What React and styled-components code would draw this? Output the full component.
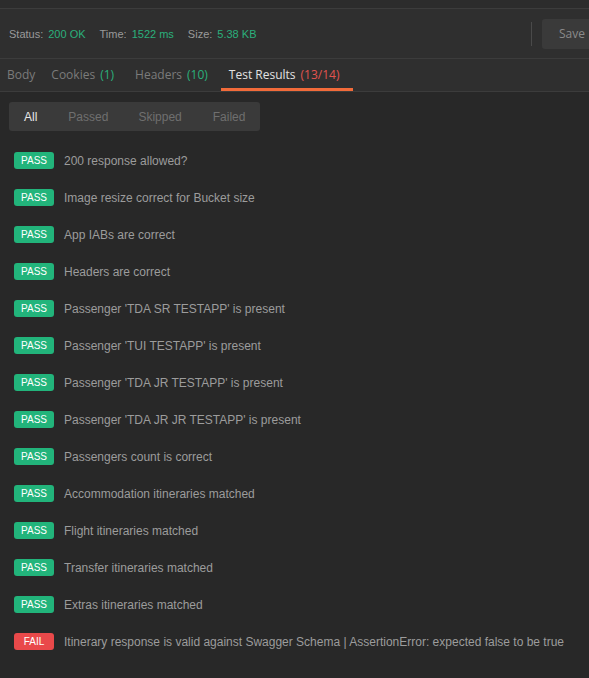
import React from 'react';
import styled, { createGlobalStyle } from 'styled-components';

const GlobalStyle = createGlobalStyle`
  html, body {
    margin: 0;
    padding: 0;
    background: #282828;
  }
  body {
    width: 589px;
    height: 678px;
    overflow: hidden;
    font-family: "Liberation Sans", Arial, sans-serif;
  }
`

const Page = styled.div`
  width: 589px;
  height: 678px;
  background: #282828;
  display: flex;
  flex-direction: column;
`

const TopStrip = styled.div`
  height: 8px;
  background: #2c2c2c;
  border-bottom: 1px solid #3c3c3c;
`

const MetaBar = styled.div`
  height: 49px;
  background: #2f2f2f;
  border-bottom: 1px solid #3c3c3c;
  display: flex;
  align-items: center;
  padding-left: 9px;
`

const MetaItem = styled.span`
  font-size: 11px;
  color: #9a9a9a;
  margin-right: 14px;
`

const MetaValue = styled.span`
  color: #2bb07c;
  margin-left: 5px;
`

const Spacer = styled.div`
  flex: 1;
`

const Divider = styled.div`
  width: 1px;
  height: 24px;
  background: #4a4a4a;
  margin-right: 10px;
`

const SaveButton = styled.div`
  width: 60px;
  height: 30px;
  margin-right: -13px;
  background: #3a3a3a;
  border-radius: 3px;
  display: flex;
  align-items: center;
  padding-left: 17px;
  box-sizing: border-box;
  font-family: "Open Sans", sans-serif;
  font-size: 12px;
  color: #8a8a8a;
`

const TabBar = styled.div`
  height: 32px;
  background: #2f2f2f;
  border-bottom: 1px solid #3c3c3c;
  display: flex;
  align-items: stretch;
`

const Tab = styled.div`
  font-family: "Open Sans", sans-serif;
  font-size: 12px;
  color: ${p => (p.$active ? '#e2e2e2' : '#7b7b7b')};
  padding: 1px ${p => (p.$active ? '13px' : '8px')} 0 8px;
  display: flex;
  align-items: center;
  box-sizing: border-box;
  border-bottom: 3px solid ${p => (p.$active ? '#f26b3a' : 'transparent')};
  margin-left: ${p => p.$gap || 0}px;
`

const Count = styled.span`
  margin-left: 5px;
  color: ${p => (p.$fail ? '#e2544f' : '#2bb07c')};
`

const Content = styled.div`
  padding: 10px 9px 0 14px;
`

const Filters = styled.div`
  width: 251px;
  height: 29px;
  margin-left: -5px;
  background: #3a3a3a;
  border-radius: 3px;
  display: flex;
  align-items: center;
  padding-top: 1px;
  box-sizing: border-box;
  font-size: 12px;
  margin-bottom: 21px;
`

const Filter = styled.span`
  color: ${p => (p.$active ? '#e8e8e8' : '#6f6f6f')};
  margin-left: ${p => p.$left}px;
`

const Results = styled.div`
  display: flex;
  flex-direction: column;
  gap: 20px;
`

const Row = styled.div`
  display: flex;
  align-items: center;
  height: 17px;
`

const Badge = styled.span`
  width: 40px;
  height: 17px;
  border-radius: 3px;
  background: ${p => (p.$fail ? '#e9494a' : '#22b47b')};
  color: #fff;
  font-size: 10px;
  display: flex;
  align-items: center;
  justify-content: center;
  margin-right: 10px;
`

const Name = styled.span`
  font-size: 12px;
  color: #9c9c9c;
  white-space: nowrap;
`

const results = [
  '200 response allowed?',
  'Image resize correct for Bucket size',
  'App IABs are correct',
  'Headers are correct',
  "Passenger 'TDA SR TESTAPP' is present",
  "Passenger 'TUI TESTAPP' is present",
  "Passenger 'TDA JR TESTAPP' is present",
  "Passenger 'TDA JR JR TESTAPP' is present",
  'Passengers count is correct',
  'Accommodation itineraries matched',
  'Flight itineraries matched',
  'Transfer itineraries matched',
  'Extras itineraries matched',
];

export default function App() {
  return (
    <Page>
      <GlobalStyle />
      <TopStrip />
      <MetaBar>
        <MetaItem>Status:<MetaValue>200 OK</MetaValue></MetaItem>
        <MetaItem>Time:<MetaValue>1522 ms</MetaValue></MetaItem>
        <MetaItem>Size:<MetaValue>5.38 KB</MetaValue></MetaItem>
        <Spacer />
        <Divider />
        <SaveButton>Save</SaveButton>
      </MetaBar>
      <TabBar>
        <Tab $gap={-1}>Body</Tab>
        <Tab>Cookies<Count>(1)</Count></Tab>
        <Tab $gap={5}>Headers<Count>(10)</Count></Tab>
        <Tab $active $gap={5}>Test Results<Count $fail>(13/14)</Count></Tab>
      </TabBar>
      <Content>
        <Filters>
          <Filter $active $left={15}>All</Filter>
          <Filter $left={31}>Passed</Filter>
          <Filter $left={30}>Skipped</Filter>
          <Filter $left={31}>Failed</Filter>
        </Filters>
        <Results>
          {results.map(r => (
            <Row key={r}>
              <Badge>PASS</Badge>
              <Name>{r}</Name>
            </Row>
          ))}
          <Row>
            <Badge $fail>FAIL</Badge>
            <Name>Itinerary response is valid against Swagger Schema | AssertionError: expected false to be true</Name>
          </Row>
        </Results>
      </Content>
    </Page>
  );
}
